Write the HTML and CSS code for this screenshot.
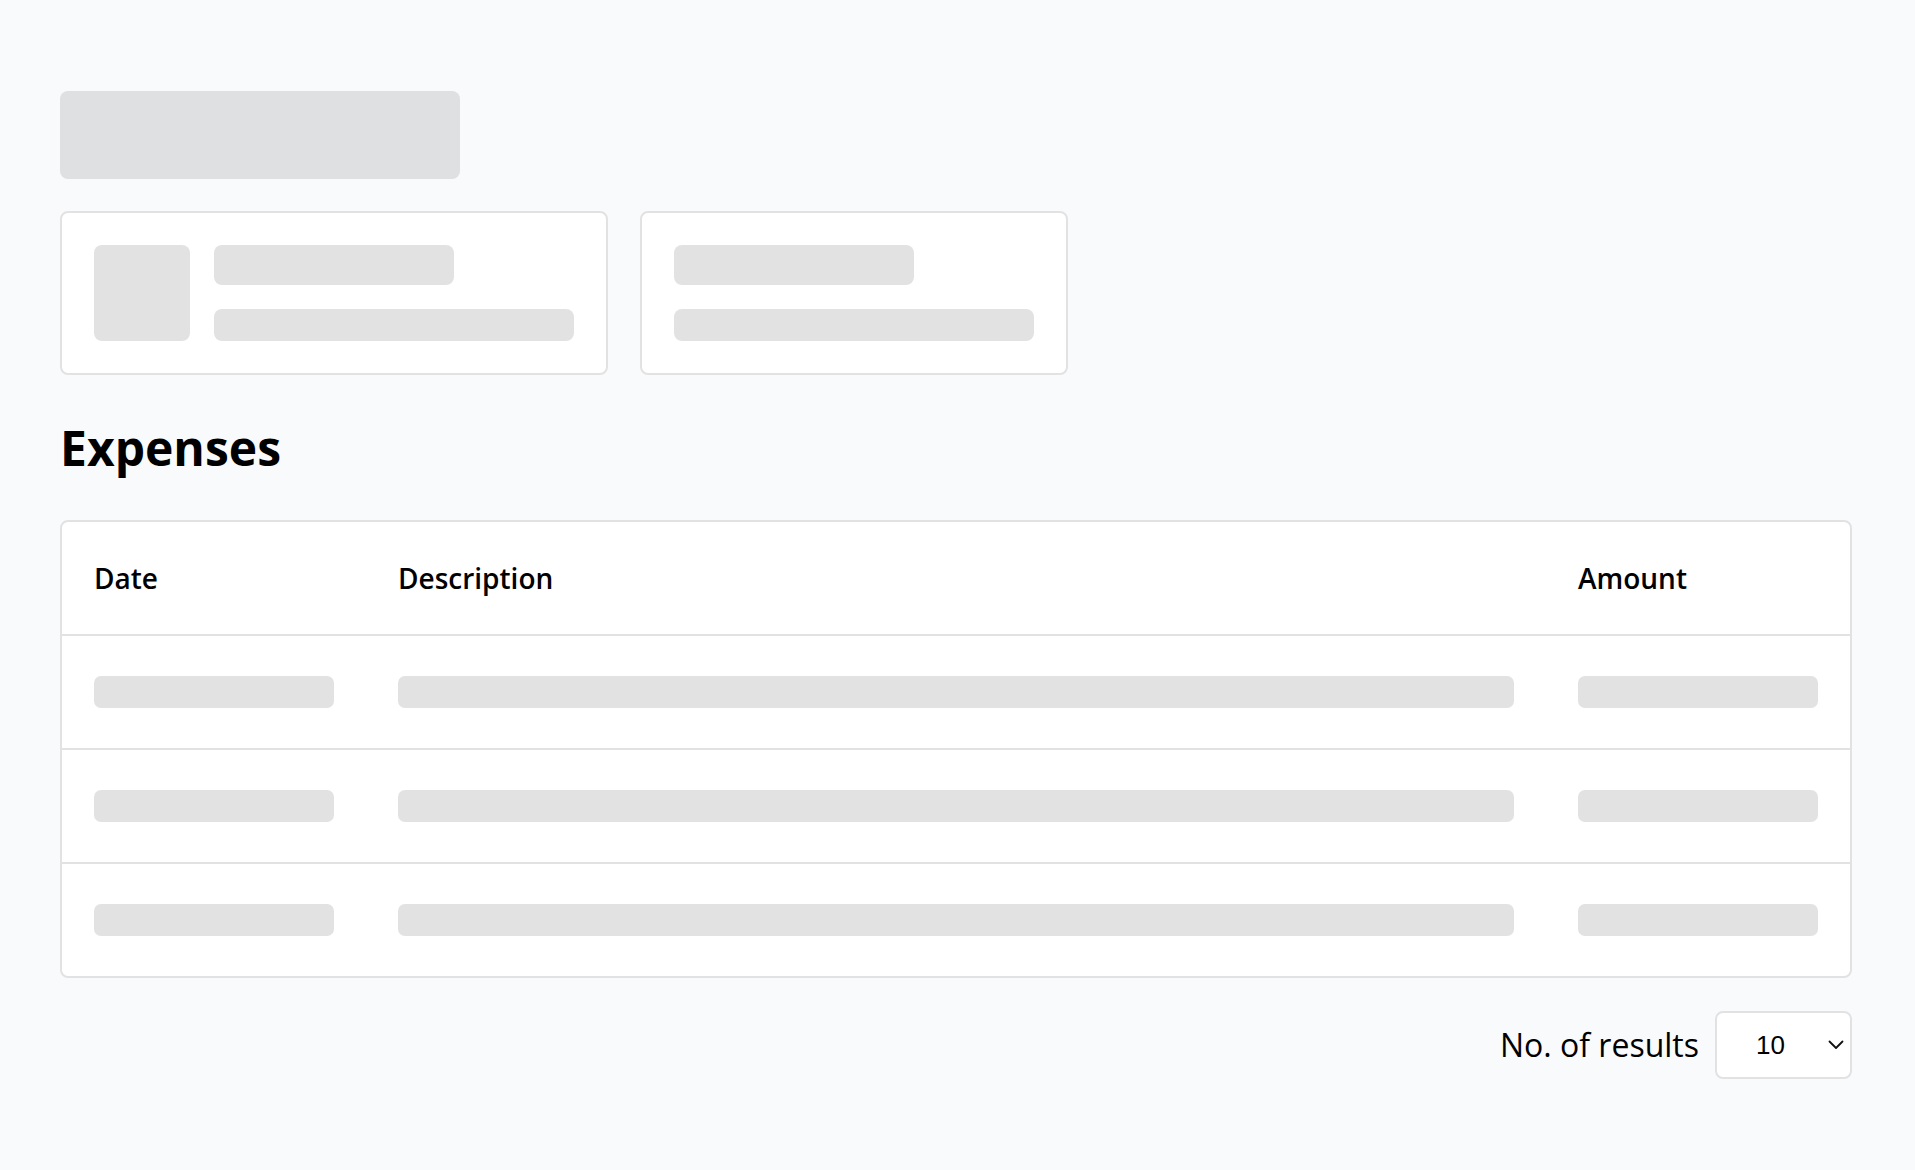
FILE: index.html
```html
<!DOCTYPE html>
<html lang="en">
<head>
<meta charset="utf-8">
<title>Expenses</title>
<link rel="stylesheet" href="styles.css">
</head>
<body>
<main class="page">
  <div class="skeleton title-skeleton"></div>

  <section class="cards">
    <div class="card card-with-icon">
      <div class="skeleton icon-skeleton"></div>
      <div class="card-lines">
        <div class="skeleton line-short"></div>
        <div class="skeleton line-long"></div>
      </div>
    </div>
    <div class="card">
      <div class="card-lines">
        <div class="skeleton line-short"></div>
        <div class="skeleton line-long"></div>
      </div>
    </div>
  </section>

  <h1 class="heading">Expenses</h1>

  <div class="table">
    <div class="row header-row">
      <div class="cell">Date</div>
      <div class="cell">Description</div>
      <div class="cell">Amount</div>
    </div>
    <div class="row">
      <div class="cell"><div class="skeleton bar"></div></div>
      <div class="cell"><div class="skeleton bar bar-full"></div></div>
      <div class="cell"><div class="skeleton bar"></div></div>
    </div>
    <div class="row">
      <div class="cell"><div class="skeleton bar"></div></div>
      <div class="cell"><div class="skeleton bar bar-full"></div></div>
      <div class="cell"><div class="skeleton bar"></div></div>
    </div>
    <div class="row">
      <div class="cell"><div class="skeleton bar"></div></div>
      <div class="cell"><div class="skeleton bar bar-full"></div></div>
      <div class="cell"><div class="skeleton bar"></div></div>
    </div>
  </div>

  <div class="pagination">
    <span class="results-label">No. of results</span>
    <div class="select">
      <span class="select-value">10</span>
      <svg class="chevron" width="16" height="10" viewBox="0 0 16 10" aria-hidden="true">
        <polyline points="1.5,1.5 8,8 14.5,1.5" fill="none" stroke="#111" stroke-width="1.8" stroke-linecap="round" stroke-linejoin="round"/>
      </svg>
    </div>
  </div>
</main>
</body>
</html>
```

FILE: styles.css
```css
* {
  box-sizing: border-box;
}

html, body {
  margin: 0;
  padding: 0;
  background: #f9fafb;
}

body {
  font-family: "Open Sans", "Noto Sans", "Liberation Sans", sans-serif;
  color: #000;
}

.page {
  display: flex;
  flex-direction: column;
  padding: 91px 63px 60px 60px;
}

.skeleton {
  background: #e2e2e2;
  border-radius: 8px;
}

.title-skeleton {
  width: 400px;
  height: 88px;
  background: #dfe0e2;
}

.cards {
  display: flex;
  gap: 32px;
  margin-top: 32px;
}

.card {
  display: flex;
  gap: 24px;
  padding: 32px;
  background: #fff;
  border: 2px solid #e2e2e2;
  border-radius: 8px;
}

.icon-skeleton {
  width: 96px;
  height: 96px;
}

.card-lines {
  display: flex;
  flex-direction: column;
  gap: 24px;
}

.line-short {
  width: 240px;
  height: 40px;
}

.line-long {
  width: 360px;
  height: 32px;
}

.heading {
  margin: 37px 0 36px;
  font-size: 48px;
  line-height: 72px;
  font-weight: 700;
}

.table {
  display: flex;
  flex-direction: column;
  background: #fff;
  border: 2px solid #e2e2e2;
  border-radius: 8px;
  overflow: hidden;
}

.row {
  display: grid;
  grid-template-columns: 304px 1fr 304px;
  height: 114px;
  border-top: 2px solid #e2e2e2;
}

.header-row {
  height: 112px;
  border-top: none;
  font-size: 28px;
  font-weight: 600;
}

.cell {
  display: flex;
  align-items: center;
  padding: 0 32px;
}

.bar {
  width: 240px;
  height: 32px;
  border-radius: 7px;
}

.bar-full {
  width: 100%;
}

.pagination {
  display: flex;
  justify-content: flex-end;
  align-items: center;
  gap: 16px;
  margin-top: 33px;
}

.results-label {
  font-size: 32px;
  line-height: 44px;
}

.select {
  display: flex;
  align-items: center;
  justify-content: space-between;
  width: 137px;
  height: 68px;
  padding: 0 6px 0 39px;
  background: #fff;
  border: 2px solid #e2e2e2;
  border-radius: 8px;
}

.select-value {
  font-family: "Liberation Sans", Arial, sans-serif;
  font-size: 26px;
  line-height: 30px;
}

.chevron {
  display: block;
}
```
